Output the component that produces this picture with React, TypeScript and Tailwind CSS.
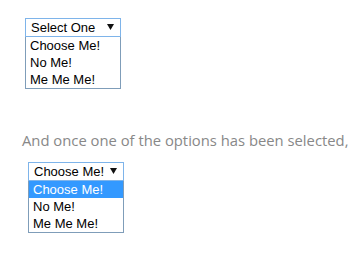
const options = ["Choose Me!", "No Me!", "Me Me Me!"];

function Dropdown({ label, selected }: { label: string; selected?: number }) {
  return (
    <div className="w-[96px] font-['Liberation_Sans',Arial,sans-serif] text-[13px] text-black">
      <div className="flex h-[19px] items-center justify-between border border-[#7eb4ea] bg-white pl-[5px] pr-[6px] leading-none">
        <span>{label}</span>
        <svg width="7" height="6" viewBox="0 0 7 6" className="mt-[-1px]">
          <path d="M0 0 H7 L3.5 6 Z" fill="#111" />
        </svg>
      </div>
      <ul className="border border-t-0 border-[#7f9db9] bg-white">
        {options.map((o, i) => (
          <li
            key={o}
            className={
              "h-[17px] pl-[4px] leading-[17px] " +
              (i === selected ? "bg-[#3399ff] text-white" : "")
            }
          >
            {o}
          </li>
        ))}
      </ul>
    </div>
  );
}

export default function App() {
  return (
    <div className="h-[271px] w-[358px] overflow-hidden bg-white pt-[18px]">
      <div className="ml-[25px]">
        <Dropdown label="Select One" />
      </div>
      <p className="ml-[22px] mt-[41px] whitespace-nowrap font-['Open_Sans',sans-serif] text-[14.8px] leading-[20px] text-[#888888]">
        And once one of the options has been selected,
      </p>
      <div className="ml-[28px] mt-[12px]">
        <Dropdown label="Choose Me!" selected={0} />
      </div>
    </div>
  );
}
